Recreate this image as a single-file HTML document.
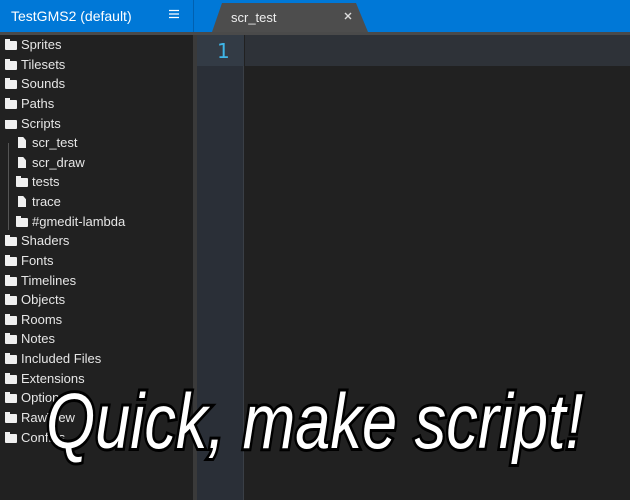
<!DOCTYPE html>
<html><head><style>
*{margin:0;padding:0;box-sizing:border-box}
body{width:630px;height:500px;overflow:hidden;background:#212121;position:relative;font-family:"Liberation Sans",sans-serif;}
.hdr{position:absolute;left:0;top:0;width:630px;height:32px;background:#0078d7}
.hdr .t{position:absolute;left:11px;top:8px;color:#fff;font-size:14px}
.div1{position:absolute;left:193px;top:0;width:1px;height:32px;background:#0060b0}
.bar{position:absolute;left:0;top:32px;width:630px;height:3px;background:#4a4a4a}
.side{position:absolute;left:0;top:35px;width:193px;height:465px;background:#212121}
.split{position:absolute;left:193px;top:35px;width:4px;height:465px;background:#3a3a3a}
.gut{position:absolute;left:197px;top:35px;width:47px;height:465px;background:#2a2f37;border-right:1px solid #3a3f46}
.al{position:absolute;left:245px;top:35px;width:385px;height:31px;background:#2e3238}
.alg{position:absolute;left:197px;top:35px;width:47px;height:31px;background:#333b45}
.ln{position:absolute;left:217px;top:39px;color:#3fb6e8;font-size:20px;font-family:"DejaVu Sans",sans-serif}
.row{position:absolute;color:#e6e6e6;font-size:13px;height:20px;line-height:20px}
.fi{display:inline-block;width:12px;height:9px;background:#f0f0f0;margin-right:4px;position:relative;vertical-align:-1px;border-radius:1px}
.fi:before{content:"";position:absolute;left:0;top:-2px;width:5px;height:3px;background:#f0f0f0}
.fl{display:inline-block;width:8px;height:11px;background:#f0f0f0;margin-right:6px;vertical-align:-1px;clip-path:polygon(0 0,65% 0,100% 30%,100% 100%,0 100%)}
.tree{position:absolute;left:8px;top:143px;width:1px;height:87px;background:#555}
.big{position:absolute;left:46px;top:376px;font-size:78px;font-style:italic;color:#fff;-webkit-text-stroke:6px #000;paint-order:stroke fill;transform:scaleX(0.81);transform-origin:0 0;white-space:nowrap;letter-spacing:0px}
</style></head><body>
<div class="hdr"><span class="t">TestGMS2 (default)</span>
<svg style="position:absolute;left:168px;top:9px" width="12" height="10"><path d="M1 1.5H11M1 5H11M1 8.5H11" stroke="#fff" stroke-width="1.3"/></svg>
</div>
<div class="div1"></div>
<svg style="position:absolute;left:0;top:0" width="630" height="35"><polygon points="212,32 222,3 356,3 368,32" fill="#4d4d4d"/>
<text x="231" y="22" fill="#eee" font-size="13" font-family="Liberation Sans">scr_test</text>
<path d="M345 13L351 19M351 13L345 19" stroke="#ddd" stroke-width="1.4"/></svg>
<div class="bar"></div>
<div class="side"></div>
<div class="split"></div>
<div class="gut"></div>
<div class="alg"></div>
<div class="al"></div>
<div class="ln">1</div>
<div class="tree"></div>
<div class="row" style="left:5px;top:35px"><i class="fi"></i>Sprites</div>
<div class="row" style="left:5px;top:55px"><i class="fi"></i>Tilesets</div>
<div class="row" style="left:5px;top:74px"><i class="fi"></i>Sounds</div>
<div class="row" style="left:5px;top:94px"><i class="fi"></i>Paths</div>
<div class="row" style="left:5px;top:114px"><i class="fi" style="clip-path:polygon(0 0,100% 0,100% 100%,0 100%)"></i>Scripts</div>
<div class="row" style="left:18px;top:133px"><i class="fl"></i>scr_test</div>
<div class="row" style="left:18px;top:153px"><i class="fl"></i>scr_draw</div>
<div class="row" style="left:16px;top:172px"><i class="fi"></i>tests</div>
<div class="row" style="left:18px;top:192px"><i class="fl"></i>trace</div>
<div class="row" style="left:16px;top:212px"><i class="fi"></i>#gmedit-lambda</div>
<div class="row" style="left:5px;top:231px"><i class="fi"></i>Shaders</div>
<div class="row" style="left:5px;top:251px"><i class="fi"></i>Fonts</div>
<div class="row" style="left:5px;top:271px"><i class="fi"></i>Timelines</div>
<div class="row" style="left:5px;top:290px"><i class="fi"></i>Objects</div>
<div class="row" style="left:5px;top:310px"><i class="fi"></i>Rooms</div>
<div class="row" style="left:5px;top:329px"><i class="fi"></i>Notes</div>
<div class="row" style="left:5px;top:349px"><i class="fi"></i>Included Files</div>
<div class="row" style="left:5px;top:369px"><i class="fi"></i>Extensions</div>
<div class="row" style="left:5px;top:388px"><i class="fi"></i>Options</div>
<div class="row" style="left:5px;top:408px"><i class="fi"></i>RawView</div>
<div class="row" style="left:5px;top:428px"><i class="fi"></i>Configs</div>
<div class="big">Quick, make script!</div>
</body></html>
